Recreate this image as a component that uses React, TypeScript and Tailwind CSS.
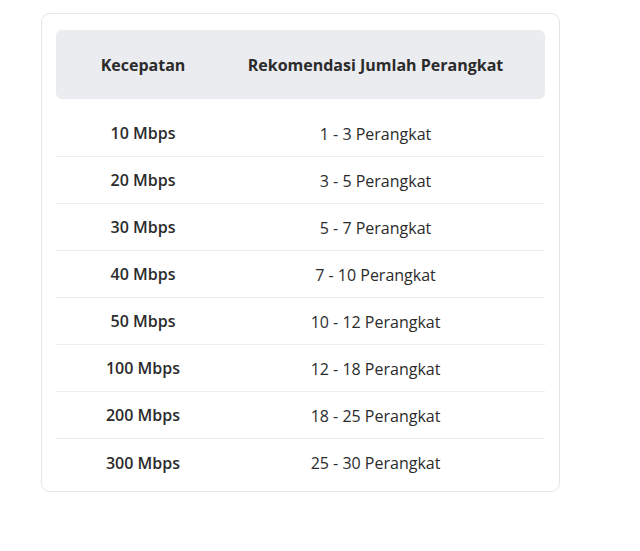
import React from "react";

const rows = [
  ["10 Mbps", "1 - 3 Perangkat"],
  ["20 Mbps", "3 - 5 Perangkat"],
  ["30 Mbps", "5 - 7 Perangkat"],
  ["40 Mbps", "7 - 10 Perangkat"],
  ["50 Mbps", "10 - 12 Perangkat"],
  ["100 Mbps", "12 - 18 Perangkat"],
  ["200 Mbps", "18 - 25 Perangkat"],
  ["300 Mbps", "25 - 30 Perangkat"],
];

export default function App() {
  return (
    <div
      className="w-[640px] h-[551px] bg-white pt-[13px] pl-[41px]"
      style={{ fontFamily: "'Open Sans', Lato, sans-serif" }}
    >
      <div className="w-[519px] rounded-[9px] border border-[#e6e6e6] px-[14px] pt-[16px] pb-[5px]">
        <div className="grid grid-cols-[174px_1fr] h-[69px] items-center rounded-[6px] bg-[#ebecf0] text-[16px] font-bold text-[#2b2b2b]">
          <div className="text-center">Kecepatan</div>
          <div className="text-center pr-[24px]">Rekomendasi Jumlah Perangkat</div>
        </div>
        <div className="mt-[11px]">
          {rows.map(([a, b], i) => (
            <div
              key={a}
              className={`grid grid-cols-[174px_1fr] items-center h-[47px] text-[16px] text-[#2b2b2b] ${
                i < rows.length - 1 ? "border-b border-[#ececec]" : ""
              }`}
            >
              <div className="text-center font-semibold">{a}</div>
              <div className="text-center pr-[24px] pt-[1px]">{b}</div>
            </div>
          ))}
        </div>
      </div>
    </div>
  );
}
